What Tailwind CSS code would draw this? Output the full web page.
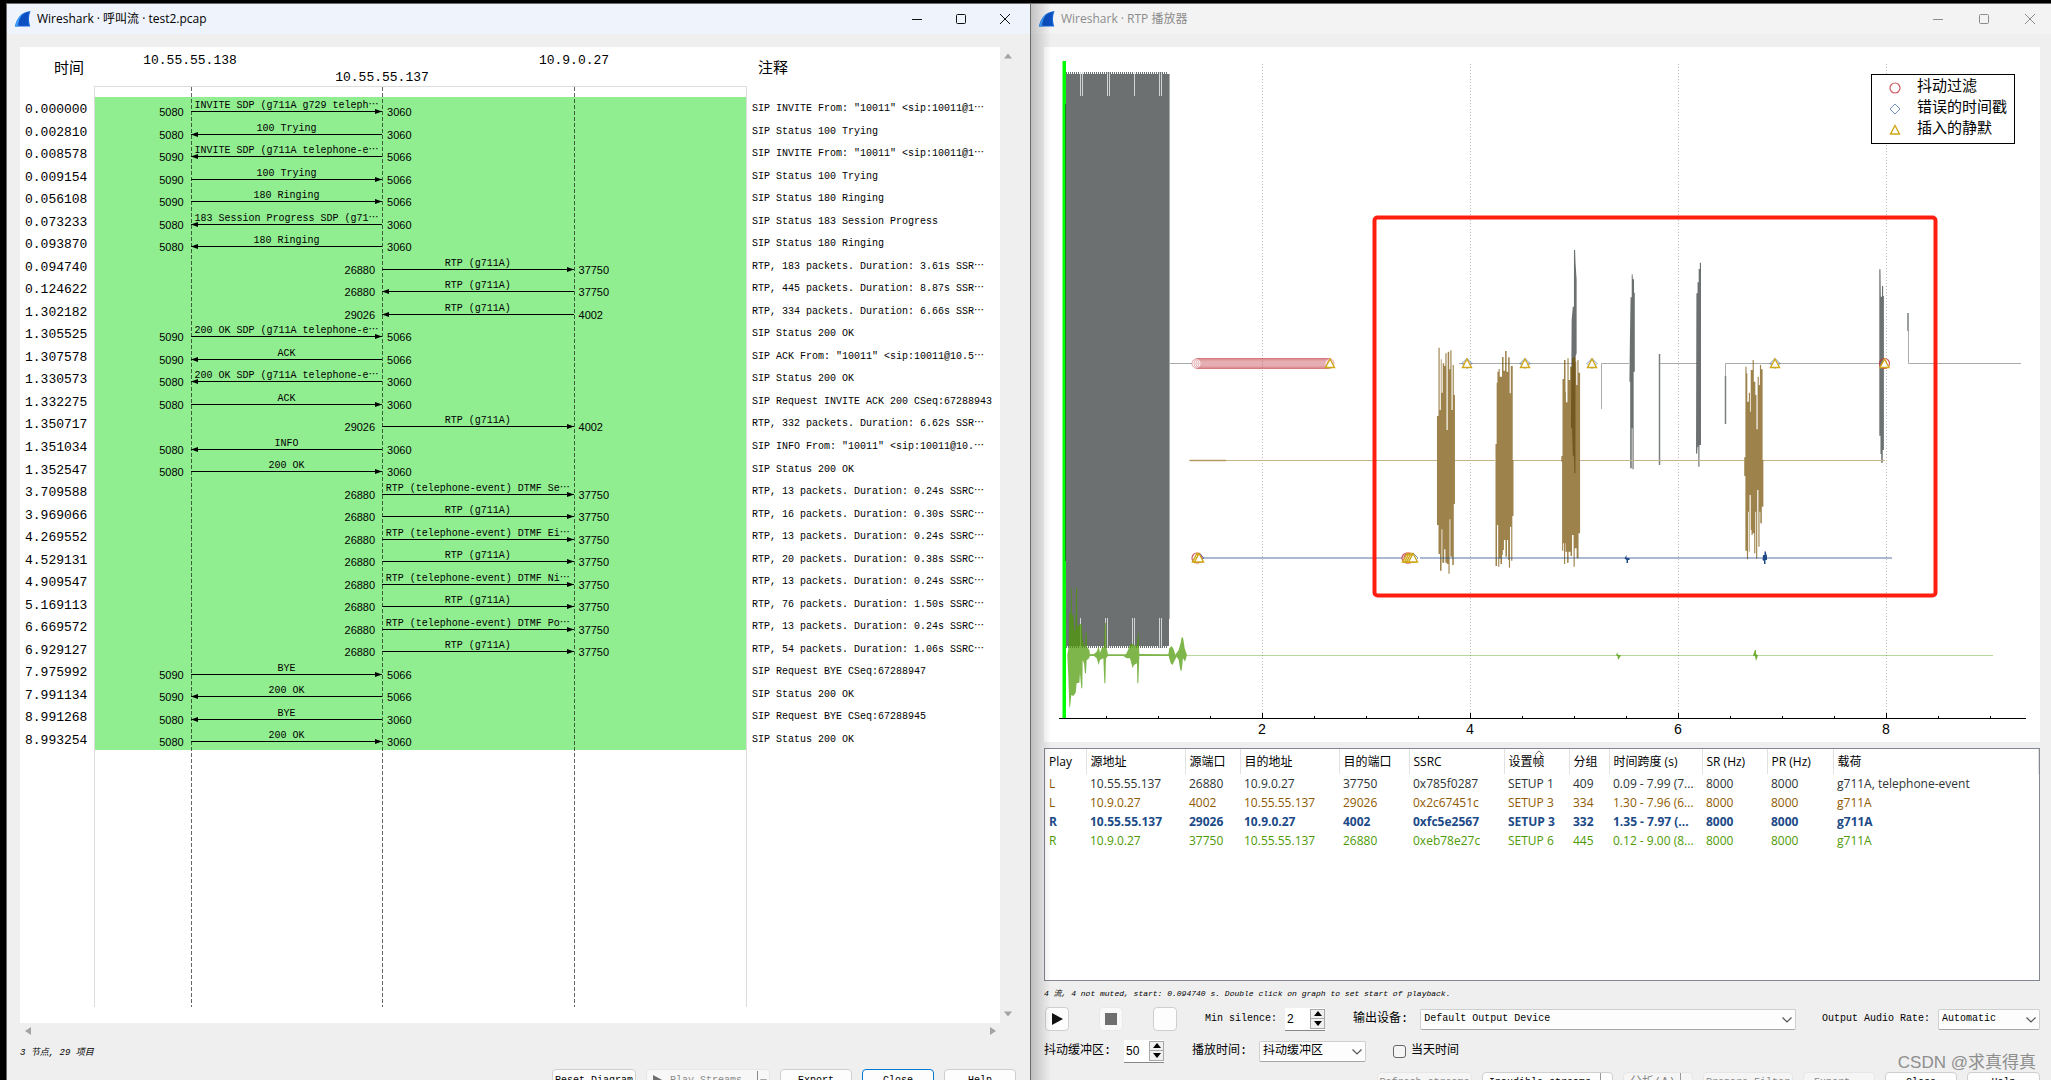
<!DOCTYPE html>
<html lang="zh-CN">
<head>
  <meta charset="UTF-8" />
  <meta name="viewport" content="width=device-width, initial-scale=1.0"/>
  <title>Wireshark</title>
  <script src="https://cdn.jsdelivr.net/npm/@tailwindcss/browser@4"></script>
</head>
<body class="bg-black h-screen overflow-hidden pl-[6px] pt-[3px] text-black text-[10px] leading-[14px] font-['Liberation_Mono','Noto_Sans_CJK_SC',monospace]">

  <!-- Shared symbols -->
  <svg class="hidden" aria-hidden="true">
    <symbol id="fin" viewBox="0 0 16 16"><path d="M0 15.500C1.500 8 6 1 15.500 0C13.500 5 13.500 10 15.200 15.500Z" fill="#1565d8"/><path d="M1.500 14.500C3 8.500 7 2.500 14 1C12 6 12.500 10 13.500 14.500Z" fill="#0c4fc0"/><path d="M0 15.500C1 10 4 5 8 2.500C5 6 3.500 10 3 15.500Z" fill="#3c9bff"/></symbol>
    <symbol id="chev" viewBox="0 0 10 6"><path d="M.5 .5L5 5L9.500 .5" fill="none" stroke="#555" stroke-width="1.200"/></symbol>
    <symbol id="up" viewBox="0 0 8 5"><path d="M4 0L8 5H0Z"/></symbol>
    <symbol id="down" viewBox="0 0 8 5"><path d="M0 0H8L4 5Z"/></symbol>
  </svg>

  <main class="grid grid-cols-[1025fr_1020fr] h-full">

    <!-- Call flow window -->
    <section class="bg-[#efefef] border-t border-x border-[#6b6b6b] min-w-0">
      <header class="h-[30px] bg-[#eff3fb] flex items-center pl-2 pr-5 font-['Open_Sans','Noto_Sans_CJK_SC',sans-serif] text-xs">
        <svg class="size-4"><use href="#fin"/></svg>
        <h1 class="ml-[6px] flex-1">Wireshark · 呼叫流 · test2.pcap</h1>
        <div class="flex items-center gap-[34px]">
          <button aria-label="最小化"><svg class="w-[10px] h-[10px]" viewBox="0 0 10 10"><path d="M0 5.500H10" stroke="#111"/></svg></button>
          <button aria-label="最大化"><svg class="w-[10px] h-[10px]" viewBox="0 0 10 10"><rect x=".5" y=".5" width="9" height="9" rx="1" fill="none" stroke="#111"/></svg></button>
          <button aria-label="关闭"><svg class="w-[10px] h-[10px]" viewBox="0 0 10 10"><path d="M0 0L10 10M10 0L0 10" stroke="#111"/></svg></button>
        </div>
      </header>

      <div class="pt-[13px] pl-[13px] pr-[14px]">
        <div class="flex">
          <div class="flex-1 bg-white h-[976px] flex">
            <!-- Time -->
            <div class="w-[74px] shrink-0 text-[13px]">
              <h2 class="h-[52px] pt-[13px] pl-[34px] text-[15px] leading-[20px]">时间</h2>
              <div id="times" class="grid auto-rows-fr items-center h-[653px] pl-[5px]"></div>
            </div>

            <!-- Sequence diagram -->
            <div class="flex-1 min-w-0">
              <div class="h-[39px] grid grid-cols-[96fr_192fr_192fr_173fr] text-[13px] leading-[18px]">
                <div></div>
                <div class="pt-[5px]"><span class="block w-[100px] -ml-[50px] text-center">10.55.55.138</span></div>
                <div class="pt-[22px]"><span class="block w-[100px] -ml-[50px] text-center">10.55.55.137</span></div>
                <div class="pt-[5px]"><span class="block w-[100px] -ml-[50px] text-center">10.9.0.27</span></div>
              </div>
              <div class="relative h-[921px] pt-[10px] border-t border-x border-[#dcdcdc]">
                <div id="flow" class="grid auto-rows-fr h-[653px] bg-[#90ee90]"></div>
                <div class="absolute inset-0 grid grid-cols-[96fr_192fr_192fr_173fr]">
                  <i></i>
                  <i class="w-px bg-[repeating-linear-gradient(#00000099_0_4px,transparent_4px_6px)]"></i>
                  <i class="w-px bg-[repeating-linear-gradient(#00000099_0_4px,transparent_4px_6px)]"></i>
                  <i class="w-px bg-[repeating-linear-gradient(#00000099_0_4px,transparent_4px_6px)]"></i>
                </div>
              </div>
            </div>

            <!-- Comment -->
            <div class="w-[253px] shrink-0">
              <h2 class="h-[51px] pt-[13px] pl-[11px] text-[15px] leading-[20px]">注释</h2>
              <div id="comments" class="grid auto-rows-fr items-center h-[653px] pl-[5px] whitespace-nowrap"></div>
            </div>
          </div>
          <div class="w-4 shrink-0 flex flex-col justify-between items-center py-[6px] fill-[#a3a3a3]">
            <svg class="w-2 h-[6px]"><use href="#up"/></svg>
            <svg class="w-2 h-[6px]"><use href="#down"/></svg>
          </div>
        </div>
        <div class="h-[15px] flex items-center justify-between pl-[5px] pr-[20px] fill-[#a3a3a3]">
          <svg class="w-[6px] h-2" viewBox="0 0 6 8"><path d="M6 0V8L0 4Z"/></svg>
          <svg class="w-[6px] h-2" viewBox="0 0 6 8"><path d="M0 0V8L6 4Z"/></svg>
        </div>
        <p class="mt-2 text-[9px] italic">3 节点, 29 项目</p>
        <div class="mt-[9px] flex justify-end gap-[10px] text-center">
          <button class="w-[84px] h-6 bg-[#fdfdfd] border border-[#cfcfcf] rounded">Reset Diagram</button>
          <button disabled class="w-[124px] h-6 bg-[#f7f7f7] border border-[#e6e6e6] rounded text-[#8a8a8a] flex items-center">
            <svg class="w-[11px] h-3 ml-[6px] mr-[6px]" viewBox="0 0 11 12"><path d="M0 0L11 6L0 12Z" fill="#6f6f6f"/></svg>
            Play Streams
            <span class="ml-auto h-5 border-l border-[#8a8a8a]"></span>
            <svg class="w-[7px] h-[5px] mx-[2px] fill-[#8a8a8a]"><use href="#down"/></svg>
          </button>
          <button class="w-[72px] h-6 bg-[#fdfdfd] border border-[#cfcfcf] rounded">Export</button>
          <button class="w-[72px] h-6 bg-[#fdfdfd] border border-[#0078d4] rounded">Close</button>
          <button class="w-[72px] h-6 bg-[#fdfdfd] border border-[#cfcfcf] rounded">Help</button>
        </div>
      </div>
    </section>

    <!-- RTP player window -->
    <section class="relative bg-[#efefef] border-t border-[#6b6b6b] min-w-0">
      <header class="h-[30px] bg-[#f3f3f3] flex items-center pl-2 pr-4 font-['Open_Sans','Noto_Sans_CJK_SC',sans-serif] text-xs text-[#8c8c8c]">
        <svg class="size-4"><use href="#fin"/></svg>
        <h1 class="ml-[6px] flex-1">Wireshark · RTP 播放器</h1>
        <div class="flex items-center gap-[36px]">
          <button aria-label="最小化"><svg class="w-[10px] h-[10px]" viewBox="0 0 10 10"><path d="M0 5.500H10" stroke="#8c8c8c"/></svg></button>
          <button aria-label="最大化"><svg class="w-[10px] h-[10px]" viewBox="0 0 10 10"><rect x=".5" y=".5" width="9" height="9" rx="1" fill="none" stroke="#8c8c8c"/></svg></button>
          <button aria-label="关闭"><svg class="w-[10px] h-[10px]" viewBox="0 0 10 10"><path d="M0 0L10 10M10 0L0 10" stroke="#8c8c8c"/></svg></button>
        </div>
      </header>

      <div class="pt-[13px] pl-[13px] pr-[11px]">
        <!-- Waveform plot -->
        <div class="relative bg-white">
          <svg class="block w-full" viewBox="1044 47 996 695">
            <defs>
              <path id="tri" d="M0 -4.500L4.500 4H-4.500Z" fill="#fff" stroke="#d0a818" stroke-width="1.400"/>
              <path id="dia" d="M0 -5L5 0L0 5L-5 0Z" fill="none" stroke="#3465a4" stroke-opacity=".7"/>
              <circle id="dot" r="5" fill="none" stroke="#c4313a" stroke-opacity=".8" stroke-width="1.200"/>
              <circle id="thin" r="5" fill="none" stroke="#b8202a" stroke-opacity=".5" stroke-width=".8"/>
            </defs>
            <path d="M1262.500 64V718M1470.500 64V718M1678.500 64V718M1886.500 64V718" stroke="#bdbdbd" stroke-dasharray="1 2"/>

            <!-- 10.55.55.137 -> 10.9.0.27 -->
            <g fill="#2e3436" opacity=".7">
              <rect x="1065" y="74" width="104" height="572"/>
              <path d="M1066 73H1168M1066 647H1168" stroke="#2e3436" stroke-width="2" stroke-dasharray="1 1"/>
            </g>
            <path d="M1080.500 72V96M1082.500 72V96M1107.500 72V96M1109.500 72V96M1134.500 72V96M1159.500 72V96M1161.500 72V96M1080.500 618V648M1105.500 618V648M1107.500 618V648M1132.500 618V648M1134.500 618V648M1159.500 618V648M1161.500 618V648" stroke="#d2d4d4"/>
            <path d="M1169.500 74V619M1169.500 363.500H1192M1459 363.500H1572M1601.500 409V363.500H1629M1659.500 363.500H1697M1725.500 377V363.500H1880M1908.500 331V363.500H2021" fill="none" stroke="#a9acad"/>
            <path d="M1659.500 354V465M1725.500 376V424M1908 313V331" stroke="#7b7f80" stroke-width="1.500"/>
            <g transform="translate(1370 200) scale(.38265 .33333)" fill="#2e3436" opacity=".7">
              <path d="M525 685L527 360L530 320H533V150H536L537 185L540 240V460L537 470V820H534L533 770L530 765L528 685Z"/>
              <path d="M678 545L679 442L681 292H684V223H686L687 238H690V278H692V515H689V808H686V685H684V805H680V545Z"/>
              <path d="M852 760L853 280H856V247H859V207H862V188H865V735H861V800H858V740H856L855 762Z"/>
              <path d="M1331 707V208H1334L1335 290H1338V258H1341V288H1343V750H1340V788H1336V762H1334V707Z"/>
            </g>

            <!-- 10.9.0.27 -> 10.55.55.137 -->
            <path d="M1189 460.500H1437M1455 460.500H1495M1513 460.500H1562M1580 460.500H1744M1763 460.500H1885" stroke="#c6b489"/>
            <path d="M1190 460.500H1226" stroke="#b39a63" stroke-width="1.500"/>
            <g transform="translate(1370 200) scale(.38265 .33333)" fill="#755000" opacity=".7">
              <path d="M175 780V648H179V443H182V630H185V478H187V578H190V490H194V498H197V460H200V690H203V455H207V508H210V451H213V630H216V495H219V585H222V912H219V1095H215V1070H210V958H208V1121H205V1092H201V1088H197V1048H194V1088H189V988H187V1112H183V1062H179V975H175Z"/>
              <path d="M328 732H331V548H333V515H336V507H339V530H345V471H349V512H353V453H357V515H361V472H365V580H368V498H373V780H375V948H372V1082H369V980H366V1103H363V1080H361V1020H358V1070H354V1020H350V1050H347V1065H345V1092H341V1075H338V1100H335V975H332V1098H328Z"/>
              <path d="M500 768H503V537H507V480H511V575H512V607H516V475H519V540H523V500H528V475H532V470H537V485H539V555H542V480H545V518H549V1000H545V1075H540V1045H535V1100H532V1005H528V1068H524V1055H519V1088H515V1055H511V1030H510V1092H507V1030H505V1052H502V785H500Z"/>
              <path d="M978 772H981V500H984V520H986V605H990V578H993V635H995V510H1000V480H1003V545H1007V585H1010V688H1013V530H1016V555H1019V495H1022V508H1026V780H1028V920H1024V970H1020V935H1018V1040H1015V870H1012V1076H1009V935H1007V1060H1004V1000H1000V1005H997V990H995V885H992V1055H990V935H988V1078H985V1052H981V828H978Z"/>
            </g>

            <!-- 10.55.55.137:29026 -->
            <path d="M1200 558H1402M1420 558H1892" stroke="#204a87" stroke-opacity=".5" stroke-width="1.500"/>
            <path d="M1624.500 558.500L1626.500 555V558H1629.500V560H1628V563H1626.500V560ZM1763 555L1764.500 555V551.500H1766V553L1767 556V560H1765.500V564H1764V561L1762.500 560Z" fill="#204a87"/>

            <!-- 10.9.0.27:37750 -->
            <path d="M1187 655.500H1993" stroke="#4e9a06" stroke-opacity=".4"/>
            <path d="M1616 655L1617.500 652V654.500L1621 655.500L1618 660L1617.500 656ZM1753 655.500L1755 650H1756V654L1758 655.500L1756 661L1755 656Z" fill="#4e9a06" opacity=".8"/>
            <rect x="1062.500" y="61" width="3.500" height="657" fill="#00ff00"/>
            <path d="M1065.500 104V561" stroke="#0a8a1a" stroke-width="1"/>
            <g transform="translate(1030 400) scale(.33333)" fill="#4e9a06" opacity=".72">
              <path d="M112 765L116 740L118 640H122L123 562H125L126 645H130L133 690H136L138 565H141L142 680L150 672H155L158 720L162 730L165 745L167 695H170L171 740L178 750L180 763L192 762L200 755L206 738L210 758L215 745L222 740L225 668H228L229 740L234 763H288L293 752L300 735L305 730L312 735L320 738L324 698H326L328 762L415 763L418 745L425 738L431 748L436 764L446 750L452 728L455 712H458L460 718L464 745L471 765L465 785L459 775L455 812H452L450 805L446 780L440 770L432 785L428 795L422 790L416 768H328L325 850H322L321 790L312 795L308 805L300 775L290 775L280 768H234L228 775L226 850H223L220 775L210 780L206 795L200 775L192 768H180L175 778L170 780L168 820H165L162 790L158 780L157 865H154L150 820L148 848L140 850L137 878L130 888L124 885L120 922H118L115 830Z"/>
            </g>

            <!-- Jitter / timestamp / silence markers -->
            <g id="jitter"></g>
            <use href="#tri" x="1330" y="363.500"/>
            <use href="#dia" x="1467" y="363.500"/><use href="#tri" x="1467" y="363.500"/>
            <use href="#dia" x="1525" y="363.500"/><use href="#tri" x="1525" y="363.500"/>
            <use href="#dia" x="1592" y="363.500"/><use href="#tri" x="1592" y="363.500"/>
            <use href="#dia" x="1775" y="363.500"/><use href="#tri" x="1775" y="363.500"/>
            <use href="#dot" x="1884.500" y="363.500"/><use href="#tri" x="1884.500" y="363.500"/>
            <use href="#dot" x="1197" y="558"/><use href="#dia" x="1199" y="558"/><use href="#tri" x="1197" y="558"/><use href="#tri" x="1199" y="558"/>
            <use href="#dot" x="1407" y="558"/><use href="#dot" x="1409" y="558"/><use href="#dia" x="1413" y="558"/><use href="#tri" x="1407" y="558"/><use href="#tri" x="1409" y="558"/><use href="#tri" x="1411" y="558"/><use href="#tri" x="1413" y="558"/>

            <!-- Time axis -->
            <path d="M1059 718.500H2026M1262.500 713V718M1470.500 713V718M1678.500 713V718M1886.500 713V718M1106.500 716V718M1158.500 716V718M1210.500 716V718M1314.500 716V718M1366.500 716V718M1418.500 716V718M1522.500 716V718M1574.500 716V718M1626.500 716V718M1730.500 716V718M1782.500 716V718M1834.500 716V718M1938.500 716V718M1990.500 716V718" stroke="#000"/>
            <g font-size="14" text-anchor="middle">
              <text x="1262" y="734">2</text>
              <text x="1470" y="734">4</text>
              <text x="1678" y="734">6</text>
              <text x="1886" y="734">8</text>
            </g>
            <rect x="1374.500" y="217.500" width="561" height="378" rx="3" fill="none" stroke="#ff1e10" stroke-width="4"/>
          </svg>
          <ul class="absolute top-[27px] right-[25px] w-[144px] h-[70px] border border-black bg-white pt-[2px] pl-[17px] text-[15px] leading-[21px]">
            <li class="flex items-center gap-4"><svg class="size-3" viewBox="-6 -6 12 12"><use href="#dot"/></svg>抖动过滤</li>
            <li class="flex items-center gap-4"><svg class="size-3" viewBox="-6 -6 12 12"><use href="#dia"/></svg>错误的时间戳</li>
            <li class="flex items-center gap-4"><svg class="size-3" viewBox="-6 -6 12 12"><use href="#tri"/></svg>插入的静默</li>
          </ul>
        </div>

        <!-- Streams -->
        <div class="mt-[6px] h-[233px] bg-white border border-[#828790] font-['Open_Sans','Noto_Sans_CJK_SC',sans-serif]">
          <table class="w-full table-fixed text-xs leading-[19px] whitespace-nowrap">
            <colgroup>
              <col class="w-[41px]"><col class="w-[99px]"><col class="w-[55px]"><col class="w-[99px]"><col class="w-[70px]"><col class="w-[95px]"><col class="w-[65px]"><col class="w-[40px]"><col class="w-[93px]"><col class="w-[65px]"><col class="w-[66px]"><col>
            </colgroup>
            <thead>
              <tr id="heads" class="h-[25px] text-left"></tr>
            </thead>
            <tbody id="streams"></tbody>
          </table>
        </div>

        <p class="mt-[6px] text-[8px] italic whitespace-nowrap">4 流, 4 not muted, start: 0.094740 s. Double click on graph to set start of playback.</p>

        <div class="mt-[6px] h-6 flex items-center pl-px">
          <button aria-label="播放" class="size-6 bg-[#fdfdfd] border border-[#cfcfcf] rounded flex items-center justify-center"><svg class="w-[11px] h-3" viewBox="0 0 11 12"><path d="M0 0L11 6L0 12Z" fill="#111"/></svg></button>
          <button aria-label="停止" disabled class="ml-[30px] size-6 bg-[#f9f9f9] border border-[#e9e9e9] rounded flex items-center justify-center"><span class="size-3 bg-[#6f6f6f]"></span></button>
          <button aria-label="暂停" class="ml-[30px] size-6 bg-[#fdfdfd] border border-[#cfcfcf] rounded"></button>
          <label for="silence" class="ml-[28px] whitespace-nowrap">Min silence:</label>
          <div class="ml-2 w-10 h-[23px] bg-white border-b border-[#868686] flex">
            <input id="silence" value="2" class="w-[25px] pl-[2px] text-[12px] font-['Liberation_Sans',sans-serif]">
            <div class="w-[15px] my-px flex flex-col border border-[#a8a8a8] bg-[#f0f0f0]">
              <button aria-label="增加" class="flex-1 flex items-center justify-center border-b border-[#a8a8a8]"><svg class="w-2 h-[5px]"><use href="#up"/></svg></button>
              <button aria-label="减少" class="flex-1 flex items-center justify-center"><svg class="w-2 h-[5px]"><use href="#down"/></svg></button>
            </div>
          </div>
          <label for="device" class="ml-7 text-[12px] whitespace-nowrap">输出设备:</label>
          <div class="relative ml-3 flex-1">
            <select id="device" class="block appearance-none w-full h-[21px] bg-[#fdfdfd] border border-[#cfcfcf] border-b-[#a8a8a8] rounded-xs pl-[3px]"><option>Default Output Device</option></select>
            <svg class="absolute right-1 top-2 w-[10px] h-[6px] pointer-events-none"><use href="#chev"/></svg>
          </div>
          <label for="rate" class="ml-[26px] whitespace-nowrap">Output Audio Rate:</label>
          <div class="relative ml-2 w-[102px]">
            <select id="rate" class="block appearance-none w-full h-[21px] bg-[#fdfdfd] border border-[#cfcfcf] border-b-[#a8a8a8] rounded-xs pl-[3px]"><option>Automatic</option></select>
            <svg class="absolute right-1 top-2 w-[10px] h-[6px] pointer-events-none"><use href="#chev"/></svg>
          </div>
        </div>

        <div class="mt-2 h-6 flex items-center text-[12px]">
          <label for="jitterBuf" class="w-20 whitespace-nowrap">抖动缓冲区:</label>
          <div class="w-10 h-[23px] bg-white border-b border-[#868686] flex">
            <input id="jitterBuf" value="50" class="w-[25px] pl-[2px] font-['Liberation_Sans',sans-serif]">
            <div class="w-[15px] my-px flex flex-col border border-[#a8a8a8] bg-[#f0f0f0]">
              <button aria-label="增加" class="flex-1 flex items-center justify-center border-b border-[#a8a8a8]"><svg class="w-2 h-[5px]"><use href="#up"/></svg></button>
              <button aria-label="减少" class="flex-1 flex items-center justify-center"><svg class="w-2 h-[5px]"><use href="#down"/></svg></button>
            </div>
          </div>
          <label for="timing" class="ml-7 w-[67px] whitespace-nowrap">播放时间:</label>
          <div class="relative w-[107px]">
            <select id="timing" class="block appearance-none w-full h-[21px] bg-[#fdfdfd] border border-[#cfcfcf] border-b-[#a8a8a8] rounded-xs pl-[3px]"><option>抖动缓冲区</option></select>
            <svg class="absolute right-1 top-2 w-[10px] h-[6px] pointer-events-none"><use href="#chev"/></svg>
          </div>
          <label class="ml-[27px] flex items-center gap-[5px]"><input type="checkbox" class="appearance-none size-[13px] border border-[#666] rounded-[3px] bg-[#f5f5f5]">当天时间</label>
        </div>

        <div class="mt-[9px] flex justify-end gap-[10px] whitespace-nowrap text-center">
          <button disabled class="w-[95px] h-[22px] bg-[#f5f5f5] border border-[#e6e6e6] rounded text-[#8a8a8a]">Refresh streams</button>
          <button class="w-[131px] h-[22px] bg-[#fdfdfd] border border-[#cfcfcf] rounded flex items-center pl-[6px]">Inaudible streams<span class="ml-auto mr-[11px] h-5 border-l border-[#999]"></span></button>
          <button disabled class="w-[70px] h-[22px] bg-[#f5f5f5] border border-[#e6e6e6] rounded text-[#8a8a8a] text-[12px] flex items-center pl-[6px]">分析(A)<span class="ml-auto mr-[11px] h-5 border-l border-[#999]"></span></button>
          <button disabled class="w-[90px] h-[22px] bg-[#f5f5f5] border border-[#e6e6e6] rounded text-[#8a8a8a]">Prepare Filter</button>
          <button disabled class="w-[72px] h-[22px] bg-[#f5f5f5] border border-[#e6e6e6] rounded text-[#8a8a8a] flex items-center justify-between pl-[10px] pr-1">Export<svg class="w-[8px] h-[5px] fill-[#8a8a8a]"><use href="#down"/></svg></button>
          <button class="w-[72px] h-[22px] bg-[#fdfdfd] border border-[#cfcfcf] rounded">Close</button>
          <button class="w-[73px] h-[22px] bg-[#fdfdfd] border border-[#cfcfcf] rounded">Help</button>
        </div>
      </div>

      <!-- Drop shadow of the window in front -->
      <div class="absolute top-0 bottom-0 left-0 w-5 bg-gradient-to-r from-black/20 to-transparent pointer-events-none"></div>
      <p class="absolute top-[1046px] right-[15px] text-[17px] leading-[26px] text-[#8e8e8e] font-['Liberation_Sans','Noto_Sans_CJK_SC',sans-serif]">CSDN @求真得真</p>
    </section>
  </main>

  <script>
    // [time, lane, direction, left port, right port, label, comment]
    const calls = [
      ["0.000000", 1, ">", 5080, 3060, "INVITE SDP (g711A g729 teleph…", 'SIP INVITE From: "10011" <sip:10011@1…'],
      ["0.002810", 1, "<", 5080, 3060, "100 Trying", "SIP Status 100 Trying"],
      ["0.008578", 1, "<", 5090, 5066, "INVITE SDP (g711A telephone-e…", 'SIP INVITE From: "10011" <sip:10011@1…'],
      ["0.009154", 1, ">", 5090, 5066, "100 Trying", "SIP Status 100 Trying"],
      ["0.056108", 1, ">", 5090, 5066, "180 Ringing", "SIP Status 180 Ringing"],
      ["0.073233", 1, "<", 5080, 3060, "183 Session Progress SDP (g71…", "SIP Status 183 Session Progress"],
      ["0.093870", 1, "<", 5080, 3060, "180 Ringing", "SIP Status 180 Ringing"],
      ["0.094740", 2, ">", 26880, 37750, "RTP (g711A)", "RTP, 183 packets. Duration: 3.61s SSR…"],
      ["0.124622", 2, "<", 26880, 37750, "RTP (g711A)", "RTP, 445 packets. Duration: 8.87s SSR…"],
      ["1.302182", 2, "<", 29026, 4002, "RTP (g711A)", "RTP, 334 packets. Duration: 6.66s SSR…"],
      ["1.305525", 1, ">", 5090, 5066, "200 OK SDP (g711A telephone-e…", "SIP Status 200 OK"],
      ["1.307578", 1, "<", 5090, 5066, "ACK", 'SIP ACK From: "10011" <sip:10011@10.5…'],
      ["1.330573", 1, "<", 5080, 3060, "200 OK SDP (g711A telephone-e…", "SIP Status 200 OK"],
      ["1.332275", 1, ">", 5080, 3060, "ACK", "SIP Request INVITE ACK 200 CSeq:67288943"],
      ["1.350717", 2, ">", 29026, 4002, "RTP (g711A)", "RTP, 332 packets. Duration: 6.62s SSR…"],
      ["1.351034", 1, "<", 5080, 3060, "INFO", 'SIP INFO From: "10011" <sip:10011@10.…'],
      ["1.352547", 1, ">", 5080, 3060, "200 OK", "SIP Status 200 OK"],
      ["3.709588", 2, ">", 26880, 37750, "RTP (telephone-event) DTMF Se…", "RTP, 13 packets. Duration: 0.24s SSRC…"],
      ["3.969066", 2, ">", 26880, 37750, "RTP (g711A)", "RTP, 16 packets. Duration: 0.30s SSRC…"],
      ["4.269552", 2, ">", 26880, 37750, "RTP (telephone-event) DTMF Ei…", "RTP, 13 packets. Duration: 0.24s SSRC…"],
      ["4.529131", 2, ">", 26880, 37750, "RTP (g711A)", "RTP, 20 packets. Duration: 0.38s SSRC…"],
      ["4.909547", 2, ">", 26880, 37750, "RTP (telephone-event) DTMF Ni…", "RTP, 13 packets. Duration: 0.24s SSRC…"],
      ["5.169113", 2, ">", 26880, 37750, "RTP (g711A)", "RTP, 76 packets. Duration: 1.50s SSRC…"],
      ["6.669572", 2, ">", 26880, 37750, "RTP (telephone-event) DTMF Po…", "RTP, 13 packets. Duration: 0.24s SSRC…"],
      ["6.929127", 2, ">", 26880, 37750, "RTP (g711A)", "RTP, 54 packets. Duration: 1.06s SSRC…"],
      ["7.975992", 1, ">", 5090, 5066, "BYE", "SIP Request BYE CSeq:67288947"],
      ["7.991134", 1, "<", 5090, 5066, "200 OK", "SIP Status 200 OK"],
      ["8.991268", 1, "<", 5080, 3060, "BYE", "SIP Request BYE CSeq:67288945"],
      ["8.993254", 1, ">", 5080, 3060, "200 OK", "SIP Status 200 OK"],
    ];

    // the ellipsis is two columns wide, so take it from the CJK font
    const esc = s => s.replace(/</g, "&lt;").replace("…", `<span class="font-['Noto_Sans_CJK_SC'] leading-none">…</span>`);

    document.getElementById("times").innerHTML = calls.map(c => `<div class="h-[18px] leading-[18px]">${c[0]}</div>`).join("");
    document.getElementById("comments").innerHTML = calls.map(c => `<div class="h-[14px]">${esc(c[6])}</div>`).join("");

    document.getElementById("flow").innerHTML = calls.map(([, lane, dir, a, b, label]) => `
      <div class="grid grid-cols-[96fr_192fr_192fr_173fr] min-h-0">
        ${lane === 2 ? "<span></span>" : ""}
        <span class="pt-2 pr-[7px] text-right text-[11px] font-['Liberation_Sans',sans-serif]">${a}</span>
        <div class="relative min-w-0">
          <div class="h-[14px] pt-[2px] text-center whitespace-nowrap">${esc(label)}</div>
          <div class="border-t border-black"></div>
          ${dir === ">"
            ? `<svg class="absolute right-0 top-3 w-[7px] h-[5px]" viewBox="0 0 7 5"><path d="M0 0L7 2.500L0 5Z"/></svg>`
            : `<svg class="absolute left-0 top-3 w-[7px] h-[5px]" viewBox="0 0 7 5"><path d="M7 0L0 2.500L7 5Z"/></svg>`}
        </div>
        <span class="pt-2 pl-[5px] text-[11px] font-['Liberation_Sans',sans-serif]">${b}</span>
      </div>`).join("");

    const heads = ["Play", "源地址", "源端口", "目的地址", "目的端口", "SSRC", "设置帧", "分组", "时间跨度 (s)", "SR (Hz)", "PR (Hz)", "载荷"];
    document.getElementById("heads").innerHTML = heads.map(h => `
      <th class="relative px-1 font-normal border-r border-[#e2e2e2]">${h}${h === "设置帧"
        ? `<svg class="absolute top-[1px] left-[30px] w-2 h-[5px]" viewBox="0 0 8 5"><path d="M.5 4.500L4 .8L7.500 4.500" fill="none" stroke="#666"/></svg>` : ""}</th>`).join("");

    const streams = [
      ["text-[#2e3436]", "L", "10.55.55.137", "26880", "10.9.0.27", "37750", "0x785f0287", "SETUP 1", "409", "0.09 - 7.99 (7...", "8000", "8000", "g711A, telephone-event"],
      ["text-[#8f5902]", "L", "10.9.0.27", "4002", "10.55.55.137", "29026", "0x2c67451c", "SETUP 3", "334", "1.30 - 7.96 (6...", "8000", "8000", "g711A"],
      ["text-[#204a87] font-bold", "R", "10.55.55.137", "29026", "10.9.0.27", "4002", "0xfc5e2567", "SETUP 3", "332", "1.35 - 7.97 (...", "8000", "8000", "g711A"],
      ["text-[#4e9a06]", "R", "10.9.0.27", "37750", "10.55.55.137", "26880", "0xeb78e27c", "SETUP 6", "445", "0.12 - 9.00 (8...", "8000", "8000", "g711A"],
    ];
    document.getElementById("streams").innerHTML = streams.map(([cls, ...cells], r) =>
      `<tr class="${cls}">${cells.map((c, i) => `<td class="pl-1 ${r === 0 && i === 0 ? "text-[#8f5902]" : ""}">${c}</td>`).join("")}</tr>`).join("");

    // Run of jitter drops on the first stream
    let dots = "";
    for (let x = 1197; x <= 1330; x += 2) dots += `<use href="#thin" x="${x}" y="363.5"/>`;
    document.getElementById("jitter").innerHTML = dots;
  </script>
</body>
</html>
